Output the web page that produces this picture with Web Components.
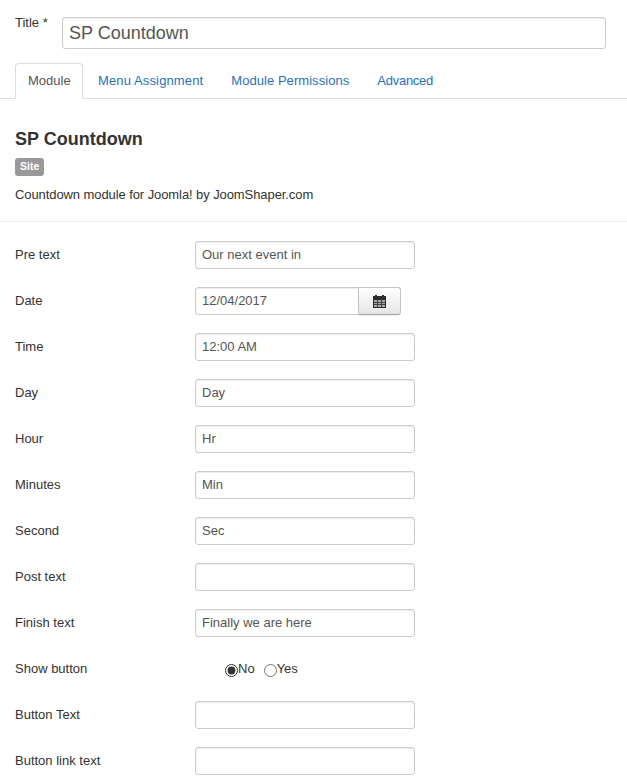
<!DOCTYPE html>
<html>
<head>
<meta charset="utf-8">
<title>SP Countdown</title>
<style>
  html, body { margin: 0; padding: 0; background: #fff; }
  body { font: 13px/18px "Liberation Sans", Arial, sans-serif; color: #333; width: 627px; height: 783px; overflow: hidden; }
</style>
</head>
<body>
<module-edit></module-edit>

<script>
/********************************* FieldRow ******************************************/
let fieldRowTmpl = document.createElement('template');
fieldRowTmpl.innerHTML = `
  <style>
    :host { display: flex; height: 28px; margin-bottom: 18px; align-items: center; }
    label { width: 180px; flex: none; margin-top: -1px; }
    .ctl { display: flex; flex: 1; align-items: center; }
    input[type=text] {
      box-sizing: border-box; width: 220px; height: 28px; margin: 0; padding: 3px 6px 5px;
      font: 13px/18px "Liberation Sans", Arial, sans-serif; color: #555; background: #fff;
      border: 1px solid #ccc; border-radius: 3px; outline: 0;
      box-shadow: inset 0 1px 1px rgba(0,0,0,.075);
    }
  </style>
  <label></label>
  <div class="ctl"><input type="text"><slot></slot></div>`;

class FieldRow extends HTMLElement {
  constructor() {
    super();
    this.attachShadow({ mode: 'open' });
    this.shadowRoot.appendChild(fieldRowTmpl.content.cloneNode(true));
  }

  connectedCallback() {
    this.shadowRoot.querySelector('label').textContent = this.getAttribute('label');
    const input = this.shadowRoot.querySelector('input');
    input.setAttribute('value', this.getAttribute('value') || '');
    if (this.hasAttribute('bare')) input.remove();
    if (this.hasAttribute('short')) {
      input.style.width = '164px';
      input.style.borderRadius = '3px 0 0 3px';
    }
  }
}
customElements.define('field-row', FieldRow);

/********************************* CalendarButton ******************************************/
let calendarTmpl = document.createElement('template');
calendarTmpl.innerHTML = `
  <style>
    :host {
      display: flex; box-sizing: border-box; width: 43px; height: 28px; margin-left: -1px;
      align-items: center; justify-content: center;
      background: linear-gradient(#fff, #e6e6e6);
      border: 1px solid #c4c4c4; border-bottom-color: #a2a2a2; border-radius: 0 3px 3px 0;
      box-shadow: inset 0 1px 0 rgba(255,255,255,.2), 0 1px 2px rgba(0,0,0,.05);
    }
    svg { display: block; }
  </style>
  <svg width="13" height="13" viewBox="0 0 13 13" shape-rendering="crispEdges">
    <path fill="#2b2b2b" d="M0 1h2V0h2v1h5V0h2v1h2v12H0z"/>
    <path fill="#a8a8a8" d="M1 5h11v7H1z"/>
    <path fill="#444" d="M1 7h11v1H1zM1 9h11v1H1zM4 5h1v7H4zM8 5h1v7H8z"/>
  </svg>`;

class CalendarButton extends HTMLElement {
  constructor() {
    super();
    this.attachShadow({ mode: 'open' });
    this.shadowRoot.appendChild(calendarTmpl.content.cloneNode(true));
  }
}
customElements.define('calendar-button', CalendarButton);

/********************************* RadioPair ******************************************/
let radioTmpl = document.createElement('template');
radioTmpl.innerHTML = `
  <style>
    :host { display: flex; align-items: center; padding-left: 30px; }
    input { margin: 2px 0 0; width: 13px; height: 13px; accent-color: #333; }
    span { margin-right: 9px; }
  </style>
  <input type="radio" name="show" checked><span>No</span>
  <input type="radio" name="show"><span>Yes</span>`;

class RadioPair extends HTMLElement {
  constructor() {
    super();
    this.attachShadow({ mode: 'open' });
    this.shadowRoot.appendChild(radioTmpl.content.cloneNode(true));
  }
}
customElements.define('radio-pair', RadioPair);

/********************************* ModuleEdit ******************************************/
let moduleTmpl = document.createElement('template');
moduleTmpl.innerHTML = `
  <style>
    :host { display: block; padding-top: 17px; }
    .title { display: flex; margin: 0 21px 0 15px; }
    .title label { width: 47px; flex: none; margin-top: -3px; }
    .title input {
      flex: 1; min-width: 0; box-sizing: border-box; height: 32px; margin: 0; padding: 4px 6px;
      font: 18px/24px "Liberation Sans", Arial, sans-serif; color: #555;
      border: 1px solid #ccc; border-radius: 3px; outline: 0;
      box-shadow: inset 0 1px 1px rgba(0,0,0,.075);
    }
    .tabs { display: flex; margin-top: 14px; padding-left: 15px; height: 35px; border-bottom: 1px solid #ddd; }
    .tabs a { display: block; height: 18px; padding: 8px 13px; color: #2a70b8; border: 1px solid transparent; white-space: nowrap; }
    .tabs a.on {
      width: 42px; color: #555; background: #fff; border-color: #ddd; border-bottom-color: #fff;
      border-radius: 4px 4px 0 0; padding: 8px 12px;
    }
    .tabs a:nth-child(2) { padding-left: 14px; letter-spacing: .13px; }
    .tabs a:nth-child(3) { letter-spacing: .05px; }
    .tabs a:nth-child(4) { letter-spacing: -.25px; }
    h2 { margin: 29px 0 0 15px; font: bold 18px/22px "Liberation Sans", Arial, sans-serif; color: #333; }
    .badge {
      display: block; width: fit-content; margin: 8px 0 0 15px; padding: 0 5px; height: 18px;
      font: bold 10.500px/17px "Liberation Sans", Arial, sans-serif; color: #fff;
      background: #999; border-radius: 3px;
    }
    p { margin: 10px 0 0 15px; letter-spacing: -.085px; }
    hr { margin: 17px 0 19px; border: 0; border-top: 1px solid #eee; }
    .fields { padding-left: 15px; }
  </style>
  <div class="title"><label>Title *</label><input type="text" value="SP Countdown"></div>
  <nav class="tabs">
    <a class="on">Module</a><a>Menu Assignment</a><a>Module Permissions</a><a>Advanced</a>
  </nav>
  <h2>SP Countdown</h2>
  <span class="badge">Site</span>
  <p>Countdown module for Joomla! by JoomShaper.com</p>
  <hr>
  <div class="fields">
    <field-row label="Pre text" value="Our next event in"></field-row>
    <field-row label="Date" value="12/04/2017" short><calendar-button></calendar-button></field-row>
    <field-row label="Time" value="12:00 AM"></field-row>
    <field-row label="Day" value="Day"></field-row>
    <field-row label="Hour" value="Hr"></field-row>
    <field-row label="Minutes" value="Min"></field-row>
    <field-row label="Second" value="Sec"></field-row>
    <field-row label="Post text"></field-row>
    <field-row label="Finish text" value="Finally we are here"></field-row>
    <field-row label="Show button" bare><radio-pair></radio-pair></field-row>
    <field-row label="Button Text"></field-row>
    <field-row label="Button link text"></field-row>
  </div>`;

class ModuleEdit extends HTMLElement {
  constructor() {
    super();
    this.attachShadow({ mode: 'open' });
    this.shadowRoot.appendChild(moduleTmpl.content.cloneNode(true));
  }
}
customElements.define('module-edit', ModuleEdit);
</script>
</body>
</html>
